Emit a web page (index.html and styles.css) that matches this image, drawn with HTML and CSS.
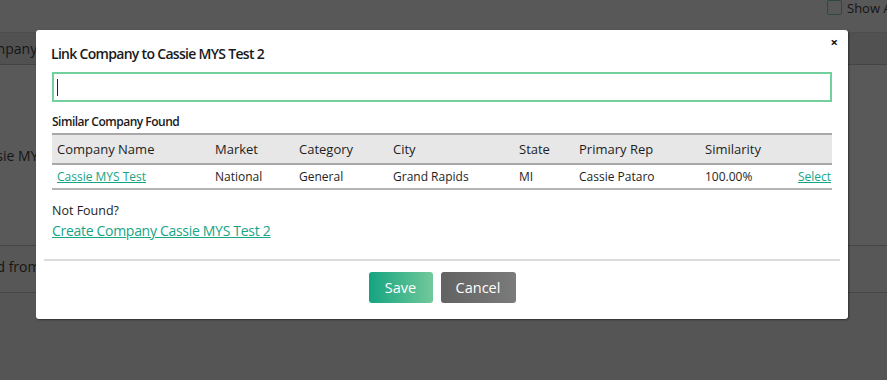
FILE: index.html
```html
<!DOCTYPE html>
<html>
<head>
<meta charset="utf-8">
<link rel="stylesheet" href="styles.css">
</head>
<body>
<div class="page">
  <div class="toolbar">
    <span class="chk"></span><span class="show">Show All</span>
  </div>
  <div class="bg-head"><span class="bg-text bg-company">Company Name</span></div>
  <div class="bg-row tall"><span class="bg-text bg-cassie">Cassie MYS Test 2</span></div>
  <div class="bg-row mid"><span class="bg-text bg-from">Imported from</span></div>
  <div class="bg-foot"></div>
</div>

<div class="modal">
  <div class="modal-head">
    <h2 class="title">Link Company to Cassie MYS Test 2</h2>
    <span class="close">×</span>
  </div>
  <div class="modal-body">
    <div class="search"><span class="caret"></span></div>
    <div class="section-label">Similar Company Found</div>
    <table class="results">
      <colgroup>
        <col class="c-name"><col class="c-market"><col class="c-cat"><col class="c-city"><col class="c-state"><col class="c-rep"><col class="c-sim"><col class="c-sel">
      </colgroup>
      <thead>
        <tr><th>Company Name</th><th>Market</th><th>Category</th><th>City</th><th>State</th><th>Primary Rep</th><th>Similarity</th><th></th></tr>
      </thead>
      <tbody>
        <tr><td><a class="link">Cassie MYS Test</a></td><td>National</td><td>General</td><td>Grand Rapids</td><td>MI</td><td>Cassie Pataro</td><td>100.00%</td><td class="sel"><a class="link">Select</a></td></tr>
      </tbody>
    </table>
    <div class="notfound">Not Found?</div>
    <a class="link create">Create Company Cassie MYS Test 2</a>
  </div>
  <div class="modal-foot">
    <button class="btn save">Save</button>
    <button class="btn cancel">Cancel</button>
  </div>
</div>
</body>
</html>
```

FILE: styles.css
```css
* { box-sizing: border-box; }
html, body { margin: 0; padding: 0; }
body {
  width: 887px;
  height: 380px;
  overflow: hidden;
  background: #585858;
  font-family: "Open Sans", "Liberation Sans", sans-serif;
  color: #1e1e1e;
  position: relative;
}
.page { width: 887px; }
.toolbar {
  height: 32px;
  display: flex;
  align-items: flex-start;
  padding-left: 827px;
  white-space: nowrap;
  overflow: hidden;
}
.chk {
  display: inline-block;
  width: 15px;
  height: 15px;
  border: 1.5px solid #2e4a3c;
  border-radius: 2px;
  flex: none;
}
.show {
  font-size: 13px;
  line-height: 17px;
  margin-left: 5px;
  color: #151515;
}
.bg-head {
  height: 33px;
  background: #515151;
  border-top: 1px solid #4d4d4d;
  border-bottom: 1px solid #444;
  display: flex;
  align-items: center;
}
.bg-text {
  font-size: 14px;
  color: #151515;
  white-space: nowrap;
}
.bg-company { margin-left: -25px; }
.bg-row {
  display: flex;
  align-items: center;
  border-bottom: 1px solid #464646;
  background: #595959;
}
.bg-row.tall { height: 181px; }
.bg-row.mid { height: 47px; background: #575757; padding-bottom: 6px; }
.bg-cassie { margin-left: -27px; }
.bg-from { margin-left: -56px; }
.bg-foot { height: 100px; background: #555; }

.modal {
  position: absolute;
  left: 36px;
  top: 30px;
  width: 812px;
  height: 289px;
  background: #fff;
  border-radius: 3px;
  box-shadow: 1px 1px 2px rgba(0,0,0,0.45);
}
.modal-head {
  position: relative;
  padding: 14px 16px 0 15px;
}
.title {
  margin: 0;
  font-size: 14px;
  font-weight: 600;
  line-height: 20px;
  color: #1a1a1a;
  letter-spacing: -0.7px;
}
.close {
  position: absolute;
  right: 10px;
  top: 4px;
  font-size: 13px;
  font-weight: 700;
  line-height: 16px;
  color: #111;
}
.modal-body { padding: 8px 16px 0 16px; }
.search {
  height: 30px;
  border: 2px solid #72cf9e;
  display: flex;
  align-items: center;
  padding-left: 3px;
}
.caret {
  display: block;
  width: 1px;
  height: 17px;
  background: #222;
}
.section-label {
  font-size: 12px;
  font-weight: 600;
  line-height: 17px;
  margin-top: 11px;
  letter-spacing: -0.5px;
  color: #1a1a1a;
}
.results {
  width: 780px;
  margin-top: 3px;
  border-collapse: collapse;
  table-layout: fixed;
  font-size: 13px;
}
.c-name { width: 158px; }
.c-market { width: 84px; }
.c-cat { width: 94px; }
.c-city { width: 126px; }
.c-state { width: 60px; }
.c-rep { width: 126px; }
.c-sim { width: 93px; }
.c-sel { width: 39px; }
.results thead tr {
  background: #e7e7e7;
  border-top: 2px solid #a8a8a8;
  border-bottom: 2px solid #a8a8a8;
}
.results th {
  text-align: left;
  font-weight: 400;
  height: 30px;
  padding: 0 0 0 5px;
  color: #1e1e1e;
  white-space: nowrap;
}
.results tbody tr { border-bottom: 2px solid #b4b4b4; }
.results td {
  height: 25px;
  padding: 0 0 0 5px;
  white-space: nowrap;
  color: #1e1e1e;
  font-size: 12px;
}
.results td.sel { text-align: right; padding: 0 1px 0 0; }
.link {
  color: #16a587;
  text-decoration: underline;
  cursor: pointer;
}
.notfound {
  font-size: 12.5px;
  line-height: 20px;
  margin-top: 11px;
}
.create {
  display: block;
  font-size: 14px;
  line-height: 20px;
  letter-spacing: -0.3px;
}
.modal-foot {
  margin: 18px 8px 0 8px;
  border-top: 2px solid #dcdcdc;
  padding-top: 11px;
  display: flex;
  justify-content: center;
  gap: 8px;
}
.btn {
  font-family: "Open Sans", "Liberation Sans", sans-serif;
  font-size: 14.5px;
  color: #fff;
  border: none;
  border-radius: 3px;
  height: 31px;
  padding: 0;
}
.save {
  width: 64px;
  background: linear-gradient(90deg, #14a480, #72c99b);
}
.cancel {
  width: 75px;
  background: linear-gradient(90deg, #626262, #7b7b7b);
}
```
